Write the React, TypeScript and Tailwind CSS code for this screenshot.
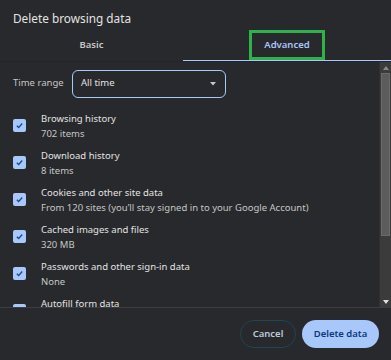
const items = [
    { title: 'Browsing history', sub: '702 items' },
    { title: 'Download history', sub: '8 items' },
    { title: 'Cookies and other site data', sub: 'From 120 sites (you\u2019ll stay signed in to your Google Account)' },
    { title: 'Cached images and files', sub: '320 MB' },
    { title: 'Passwords and other sign-in data', sub: 'None' },
    { title: 'Autofill form data', sub: '' },
]

function Check() {
    return (
        <div className="w-[13px] h-[13px] rounded-[2px] bg-[#a8c7fa] flex items-center justify-center shrink-0">
            <svg width="9" height="9" viewBox="0 0 10 10">
                <path d="M2 5.2 L4.1 7.2 L8 2.8" fill="none" stroke="#1b4a8c" strokeWidth="1.4" />
            </svg>
        </div>
    )
}

export default function App() {
    return (
        <div
            className="w-[391px] h-[360px] bg-[#28292c] text-[#e3e3e3] flex flex-col overflow-hidden"
            style={{ fontFamily: '"Noto Sans", "Open Sans", sans-serif' }}
        >
            <div className="h-[30px] pl-[13px] pt-[9px] text-[11.8px] leading-[18px]">Delete browsing data</div>

            <div className="flex h-[32px] text-[9.5px] font-semibold border-b border-[#232427]">
                <div className="w-[183px] flex items-center justify-center pb-[1px] text-[#c7c7c7]">Basic</div>
                <div className="flex-1 flex flex-col">
                    <div className="flex-1 flex items-center justify-center">
                        <div className="w-[76px] h-[30px] border-[3px] border-[#2fb14b] flex items-center justify-center text-[#a8c7fa]">
                            Advanced
                        </div>
                    </div>
                    <div className="h-[2px] bg-[#a8c7fa]" />
                </div>
            </div>

            <div className="flex h-[246px] border-b border-[#3c3d40]">
                <div className="flex-1 overflow-hidden">
                    <div className="flex items-center h-[42px] pl-[13px] pt-[1px] text-[9.5px]">
                        <span className="w-[59px] text-[#c7c7c7]">Time range</span>
                        <div className="w-[154px] h-[28px] rounded-[6px] border-[1.5px] border-[#a8c7fa] flex items-center justify-between pl-[8px] pr-[9px]">
                            <span>All time</span>
                            <svg width="6" height="4" viewBox="0 0 6 4">
                                <path d="M0 0 L6 0 L3 3.5 Z" fill="#c7c7c7" />
                            </svg>
                        </div>
                    </div>
                    <div className="flex flex-col pt-[3px]">
                        {items.map((it) => (
                            <div key={it.title} className="flex items-center h-[37px] pl-[13px]">
                                <Check />
                                <div className="pl-[15px] flex flex-col text-[9.5px] leading-[15px]">
                                    <span className="text-[#e3e3e3]">{it.title}</span>
                                    <span className="text-[#c4c7c5]">{it.sub || '\u00a0'}</span>
                                </div>
                            </div>
                        ))}
                    </div>
                </div>
                <div className="w-[12px] bg-[#3b3b3b] border-l border-[#2f2f2f] flex flex-col items-center">
                    <div className="h-[11px] flex items-center justify-center">
                        <svg width="6" height="4" viewBox="0 0 6 4">
                            <path d="M0 4 L6 4 L3 0 Z" fill="#8a8a8a" />
                        </svg>
                    </div>
                    <div className="w-[9px] h-[163px] bg-[#5c5c5c] border border-[#6a6a6a]" />
                    <div className="flex-1" />
                    <div className="h-[11px] flex items-center justify-center">
                        <svg width="6" height="4" viewBox="0 0 6 4">
                            <path d="M0 0 L6 0 L3 4 Z" fill="#e0e0e0" />
                        </svg>
                    </div>
                </div>
            </div>

            <div className="flex justify-end items-center gap-[6px] pr-[12px] pt-[12px] text-[9.5px] font-semibold">
                <button className="w-[56px] h-[28px] rounded-full border border-[#1f4652] text-[#bccadb]">Cancel</button>
                <button className="w-[77px] h-[28px] rounded-full bg-[#a8c7fa] text-[#0b3a7a]">Delete data</button>
            </div>
        </div>
    )
}
